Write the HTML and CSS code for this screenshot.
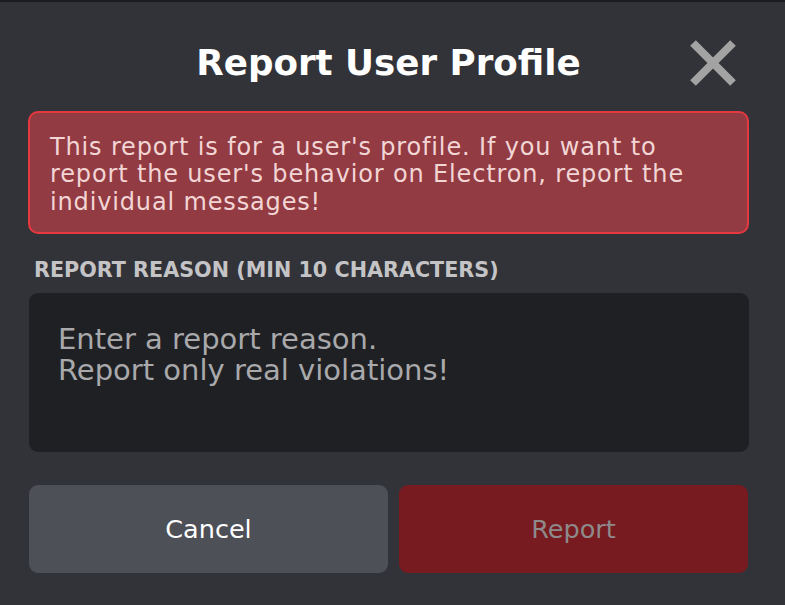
FILE: index.html
```html
<!DOCTYPE html>
<html lang="en">
<head>
  <meta charset="UTF-8" />
  <title>Report User Profile</title>
  <link rel="stylesheet" href="styles.css">
</head>
<body>

  <div class="modal">

    <div class="modal_header">
      <h1 class="modal_title">Report User Profile</h1>
      <button class="close_btn" aria-label="Close">
        <svg width="46" height="46" viewBox="0 0 46 46">
          <path d="M 3,3 L 43,43 M 43,3 L 3,43"
                stroke="#a3a3a3" stroke-width="8" fill="none" />
        </svg>
      </button>
    </div>

    <!-- 注意書き -->
    <div class="warning">
      This report is for a user's profile. If you want to
      report the user's behavior on Electron, report the
      individual messages!
    </div>

    <label class="field_label" for="reason">Report Reason (min 10 characters)</label>
    <textarea id="reason" class="reason"
              placeholder="Enter a report reason.&#10;Report only real violations!"></textarea>

    <div class="actions">
      <button class="btn btn_cancel">Cancel</button>
      <button class="btn btn_report" disabled>Report</button>
    </div>

  </div>

</body>
</html>
```

FILE: styles.css
```css
body {
  margin: 0;
  padding: 0;
  background: #323338;
  font-family: "DejaVu Sans", "Open Sans", sans-serif;
}

.modal {
  height: 603px;
  border-top: 2px solid #1c1c20;
  padding: 0 36px 0 28px;
  display: flex;
  flex-direction: column;
}

/* ========================== */
/* ヘッダー */
/* ========================== */

.modal_header {
  position: relative;
  height: 109px;
  display: flex;
  justify-content: center;
  align-items: center;
  padding-top: 12px;
  box-sizing: border-box;
}

.modal_title {
  margin: 0;
  color: #ffffff;
  font-size: 35.7px;
  font-weight: 700;
}

.close_btn {
  position: absolute;
  right: 13px;
  top: 38px;
  width: 46px;
  height: 46px;
  padding: 0;
  border: none;
  background: none;
  cursor: pointer;
}

.close_btn svg {
  display: block;
}

/* ========================== */
/* 注意書き */
/* ========================== */

.warning {
  background: #933b42;
  border: 2px solid #e5383f;
  border-radius: 10px;
  padding: 20.5px 50px 15.5px 20px;
  color: #f2d5d5;
  font-size: 24px;
  letter-spacing: 0.85px;
  line-height: 27.7px;
}

/* ========================== */
/* 入力欄 */
/* ========================== */

.field_label {
  display: block;
  margin: 23.8px 0 11.2px 6px;
  color: #c4c4c6;
  font-size: 20.7px;
  font-weight: 700;
  line-height: 24px;
  text-transform: uppercase;
}

.reason {
  display: block;
  margin-left: 1px;
  height: 159px;
  box-sizing: border-box;
  padding: 30.6px 29px;
  background: #1f2024;
  border: none;
  border-radius: 9px;
  resize: none;
  outline: none;
  color: #e0e0e0;
  font-family: inherit;
  font-size: 29px;
  line-height: 31.4px;
}

.reason::placeholder {
  color: #a9a9ab;
}

/* ========================== */
/* ボタン */
/* ========================== */

.actions {
  display: grid;
  grid-template-columns: 359px 349px;
  gap: 11px;
  margin: 33px 0 0 1px;
}

.btn {
  height: 88px;
  border: none;
  border-radius: 9px;
  font-family: inherit;
  font-size: 25.5px;
  cursor: pointer;
}

.btn_cancel {
  background: #4e5058;
  color: #ffffff;
}

.btn_report {
  background: #771b20;
  color: #8e8a8b;
  cursor: default;
}
```
